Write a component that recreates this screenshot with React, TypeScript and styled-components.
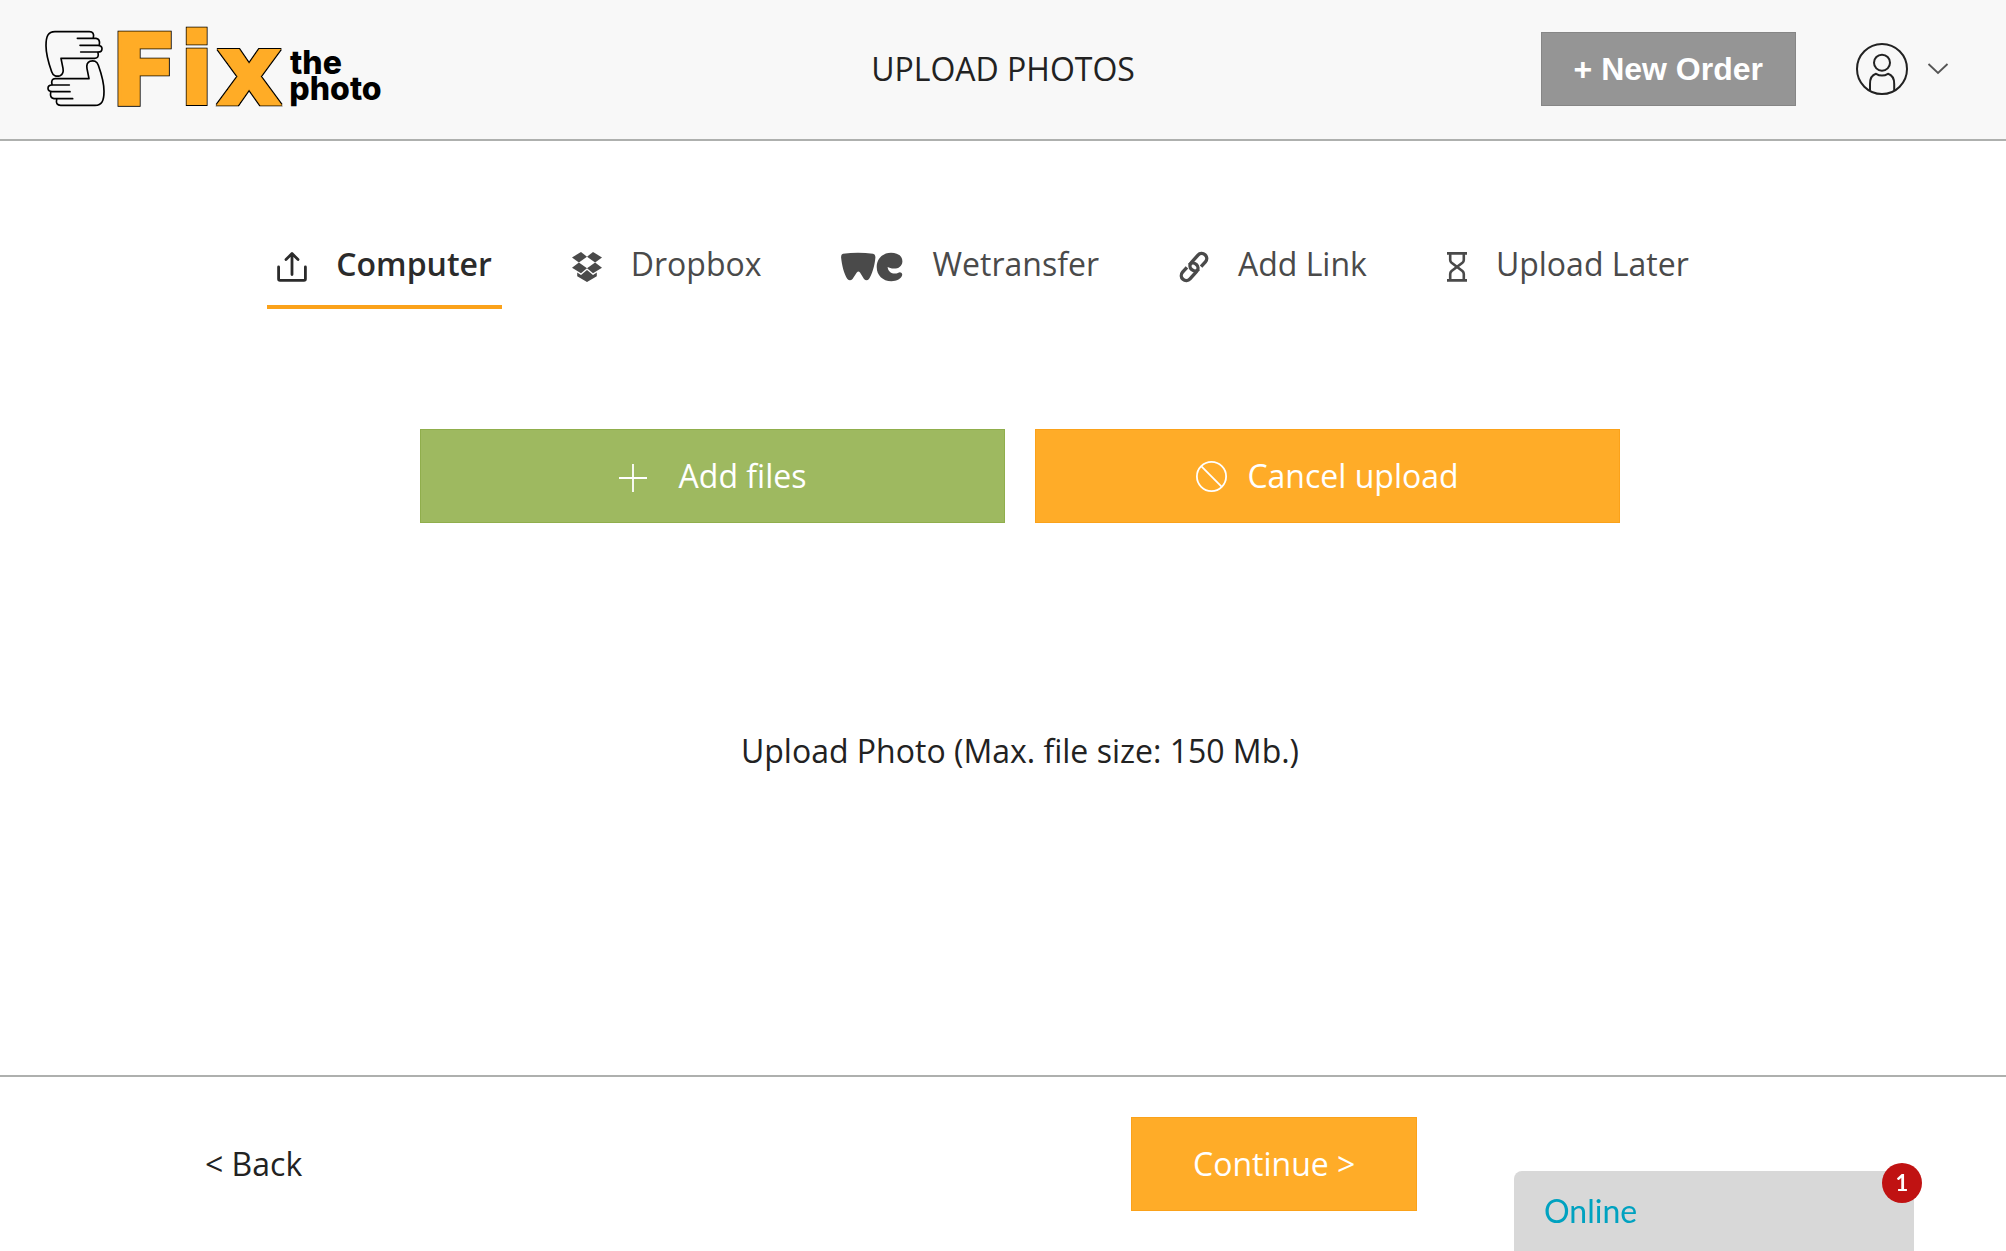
import React from "react";
import styled, { createGlobalStyle } from "styled-components";

const colors = {
  orange: "#ffac28",
  orangeEdge: "#fba21a",
  green: "#9eb960",
  greenEdge: "#90ae4c",
  grey: "#959595",
  line: "#aeb0ae",
  ink: "#222222",
  muted: "#4a4a4a",
};

const GlobalStyle = createGlobalStyle`
  *, *::before, *::after { box-sizing: border-box; }
  body {
    margin: 0;
    background: #ffffff;
    color: ${colors.ink};
    font-family: "Open Sans", "Noto Sans", sans-serif;
    font-size: 32px;
    line-height: 44px;
  }
  a { color: inherit; text-decoration: none; }
  button { font: inherit; border: 0; cursor: pointer; }
  svg { display: block; flex: none; overflow: visible; }
`;

const Page = styled.div`
  display: flex;
  flex-direction: column;
  min-height: 100vh;
`;

const Header = styled.header`
  display: grid;
  grid-template-columns: 1fr auto 1fr;
  align-items: center;
  padding: 29px 45px 30px;
  background: #f8f8f8;
  border-bottom: 2px solid ${colors.line};
`;

const Title = styled.h1`
  margin: 0;
  font-size: 32px;
  font-weight: 400;
  line-height: 44px;
`;

const Account = styled.div`
  display: flex;
  align-items: center;
  justify-content: flex-end;
  gap: 60px;
  padding-right: 13px;
`;

const NewOrder = styled.button`
  padding: 14px 32px;
  background: ${colors.grey};
  border: 1px solid #868686;
  color: #ffffff;
  font-family: "Liberation Sans", Arial, sans-serif;
  font-weight: 700;
`;

const Profile = styled.button`
  display: flex;
  align-items: center;
  gap: 20px;
  padding: 0;
  background: none;
  color: ${colors.ink};
`;

const Main = styled.main`
  flex: 1;
  display: flex;
  flex-direction: column;
  align-items: center;
  padding: 101px 0 0 34px;
`;

const Tabs = styled.nav`
  display: flex;
  gap: 60px;
  padding-right: 74px;
`;

const Tab = styled.a<{ $active?: boolean }>`
  display: flex;
  align-items: center;
  gap: 29px;
  padding: 0 10px 19px;
  border-bottom: 4px solid ${(p) => (p.$active ? colors.orangeEdge : "transparent")};
  color: ${(p) => (p.$active ? "#2b2b2b" : colors.muted)};
  font-weight: ${(p) => (p.$active ? 600 : 400)};

  svg { margin-top: 6px; }
`;

const Actions = styled.div`
  display: grid;
  grid-template-columns: 1fr 1fr;
  gap: 30px;
  width: 100%;
  max-width: 1200px;
  margin-top: 120px;
`;

const Action = styled.button<{ $tone: "green" | "orange"; $gap?: number }>`
  display: flex;
  align-items: center;
  justify-content: center;
  gap: ${(p) => p.$gap ?? 20}px;
  padding: 24px 61px;
  background: ${(p) => colors[p.$tone]};
  border: 1px solid ${(p) => (p.$tone === "green" ? colors.greenEdge : colors.orangeEdge)};
  color: #ffffff;
`;

const Hint = styled.p`
  margin: 206px 0 0;
`;

const Footer = styled.footer`
  display: grid;
  grid-template-columns: 1131fr 875fr;
  align-items: center;
  padding: 40px 0;
  border-top: 2px solid ${colors.line};
`;

const Back = styled.a`
  justify-self: start;
  padding-left: 205px;
`;

const Continue = styled(Action)`
  justify-self: start;
`;

const Chat = styled.button`
  position: fixed;
  right: 92px;
  bottom: 0;
  width: 400px;
  height: 80px;
  padding: 0 30px;
  background: #d8d8d8;
  border-radius: 8px 8px 0 0;
  color: #00a2c0;
  font-family: Lato, sans-serif;
  text-align: left;
`;

const Badge = styled.span`
  position: absolute;
  top: -8px;
  right: -8px;
  width: 40px;
  height: 40px;
  border-radius: 50%;
  background: #c01212;
  color: #ffffff;
  font-size: 22px;
  font-weight: 700;
  line-height: 40px;
  text-align: center;
`;

function Hand({ flipped }: { flipped?: boolean }) {
  return (
    <g transform={flipped ? "rotate(180 135 160.5)" : undefined}>
      <path d="M190 68 Q194 50 178 50 H75 C54 50 48 64 48 92 C48 118 55 142 65 170 C69 182 79 186 90 182 C99 178 101 171 99 160 L93 130 H194 Q208 130 204 113" />
      <path d="M142 70 H198 Q211 72 208 89" />
      <path d="M150 91 H204 Q216 92 216 101 Q216 111 204 111 H152" />
    </g>
  );
}

function Logo() {
  return (
    <svg width="340" height="80" viewBox="45 42 1020 240" role="img" aria-label="Fix the photo">
      <defs>
        <filter id="outline" x="-10%" y="-10%" width="120%" height="120%">
          <feMorphology in="SourceAlpha" operator="dilate" radius="3" result="edge" />
          <feMerge>
            <feMergeNode in="edge" />
            <feMergeNode in="SourceGraphic" />
          </feMerge>
        </filter>
      </defs>
      <g fill="none" stroke="#000" strokeWidth="5" strokeLinecap="round" strokeLinejoin="round">
        <Hand />
        <Hand flipped />
      </g>
      <text
        x="243 450 563"
        y="266"
        fill="#ffac28"
        stroke="#ffac28"
        strokeWidth="8"
        filter="url(#outline)"
        fontFamily="DejaVu Sans, sans-serif"
        fontWeight="700"
        fontSize="292"
      >
        Fix
      </text>
      <text fill="#000" fontFamily="Inter, sans-serif" fontWeight="800" fontSize="96">
        <tspan x="780" y="178">the</tspan>
        <tspan x="778" y="254">photo</tspan>
      </text>
    </svg>
  );
}

const UserIcon = () => (
  <svg width="52" height="52" viewBox="0 0 52 52" fill="none" stroke="currentColor" strokeWidth="2" aria-hidden="true">
    <circle cx="26" cy="26" r="25" />
    <circle cx="26" cy="19.7" r="8" />
    <path d="M14 47.5 V41 C14 35.5 16 32 20 30.8 Q26 34.2 32 30.8 C36 32 38.2 35.5 38.2 41 V47.5" />
  </svg>
);

const ChevronIcon = () => (
  <svg width="20" height="12" viewBox="0 0 20 12" fill="none" stroke="#555" strokeWidth="1.8" aria-hidden="true">
    <path d="M.5 1 L10 10 19.5 1" />
  </svg>
);

const UploadIcon = () => (
  <svg width="30" height="30" viewBox="0 0 30 30" fill="none" stroke="currentColor" strokeWidth="2.8" strokeLinecap="round" strokeLinejoin="round" aria-hidden="true">
    <path d="M1.6 15 V27 Q1.6 28.4 3 28.4 H27 Q28.4 28.4 28.4 27 V15" />
    <path d="M15 22.5 V2 M9 7.5 L15 1.6 21 7.5" />
  </svg>
);

const DropboxIcon = () => (
  <svg width="30" height="30" viewBox="0 0 30 30" fill="currentColor" aria-hidden="true">
    <path d="M9 0 L15 4.7 6.9 10.5 0 5.4Z" />
    <path d="M21 0 L15 4.7 23.1 10.5 30 5.4Z" />
    <path d="M0 15.8 L6.9 10.5 15 16.2 9 21.2Z" />
    <path d="M30 15.8 L23.1 10.5 15 16.2 21 21.2Z" />
    <path d="M5.2 20.6 L9 23 15 18 21 23 24.8 20.6 V24.2 L15 30 5.2 24.2Z" />
  </svg>
);

const WetransferIcon = () => (
  <svg width="62" height="30" viewBox="0 0 62 30" fill="currentColor" aria-hidden="true">
    <path d="M2 1.8 Q17 -.4 32 1.8 Q34.6 2.4 34.4 5.5 C33.6 14 31.2 22 28 27 Q25.5 29.6 23 27 L19 20.6 Q17.4 18.6 15.8 20.6 L11.5 27 Q9 29.6 6.4 27 C3 22 .8 13 .1 5.5 Q-.1 2.4 2 1.8Z" />
    <path d="M50 .7 C57.5 .7 61.5 4.5 61.4 9.4 C61.2 14 57.5 16.6 53 16.6 C50 16.6 48.2 15.7 46.6 15 C47 19.4 50.4 21.6 53.6 21.6 C56.6 21.6 57.5 20.2 59 20.2 Q61.5 20.4 61.2 23 C60.6 26.6 55.6 29.2 50.4 29.2 C41.6 29.2 35.7 23.2 35.7 15 C35.7 6.6 42 .7 50 .7Z" />
  </svg>
);

const LinkIcon = () => (
  <svg width="30" height="30" viewBox="-15 -15 30 30" fill="none" stroke="currentColor" strokeWidth="3.4" aria-hidden="true">
    <g transform="rotate(-48)">
      <path d="M5 5 H11.5 A5 5 0 0 0 11.5 -5 H1.5 A5 5 0 0 0 1.5 5" />
      <path d="M-5 -5 H-11.5 A5 5 0 0 0 -11.5 5 H-1.5 A5 5 0 0 0 -1.5 -5" />
    </g>
  </svg>
);

const HourglassIcon = () => (
  <svg width="20" height="30" viewBox="0 0 20 30" fill="none" stroke="currentColor" strokeWidth="2.6" aria-hidden="true">
    <path d="M0 1.4 H20 M0 28.4 H20" />
    <path d="M3.2 2 V8 Q3.2 9.6 4.6 10.8 L15.4 19 Q16.8 20.2 16.8 22 V28" />
    <path d="M16.8 2 V8 Q16.8 9.6 15.4 10.8 L4.6 19 Q3.2 20.2 3.2 22 V28" />
  </svg>
);

const PlusIcon = () => (
  <svg width="28" height="32" viewBox="0 0 28 32" stroke="currentColor" strokeWidth="1.8" aria-hidden="true">
    <path d="M0 18 H28 M14 4 V32" />
  </svg>
);

const CancelIcon = () => (
  <svg width="31" height="31" viewBox="0 0 31 31" fill="none" stroke="currentColor" strokeWidth="1.8" aria-hidden="true">
    <circle cx="15.5" cy="15.5" r="14.6" />
    <path d="M5.2 5.2 L25.8 25.8" />
  </svg>
);

const sources = [
  { label: "Computer", Icon: UploadIcon },
  { label: "Dropbox", Icon: DropboxIcon },
  { label: "Wetransfer", Icon: WetransferIcon },
  { label: "Add Link", Icon: LinkIcon },
  { label: "Upload Later", Icon: HourglassIcon },
];

export default function App() {
  return (
    <Page>
      <GlobalStyle />
      <Header>
        <a href="#home">
          <Logo />
        </a>
        <Title>UPLOAD PHOTOS</Title>
        <Account>
          <NewOrder type="button">+ New Order</NewOrder>
          <Profile type="button" aria-label="Account">
            <UserIcon />
            <ChevronIcon />
          </Profile>
        </Account>
      </Header>
      <Main>
        <Tabs>
          {sources.map(({ label, Icon }, index) => (
            <Tab key={label} href="#source" $active={index === 0}>
              <Icon />
              {label}
            </Tab>
          ))}
        </Tabs>
        <Actions>
          <Action type="button" $tone="green" $gap={32}>
            <PlusIcon />
            Add files
          </Action>
          <Action type="button" $tone="orange">
            <CancelIcon />
            Cancel upload
          </Action>
        </Actions>
        <Hint>Upload Photo (Max. file size: 150 Mb.)</Hint>
      </Main>
      <Footer>
        <Back href="#back">&lt; Back</Back>
        <Continue type="button" $tone="orange">
          Continue &gt;
        </Continue>
      </Footer>
      <Chat type="button">
        Online
        <Badge>1</Badge>
      </Chat>
    </Page>
  );
}
